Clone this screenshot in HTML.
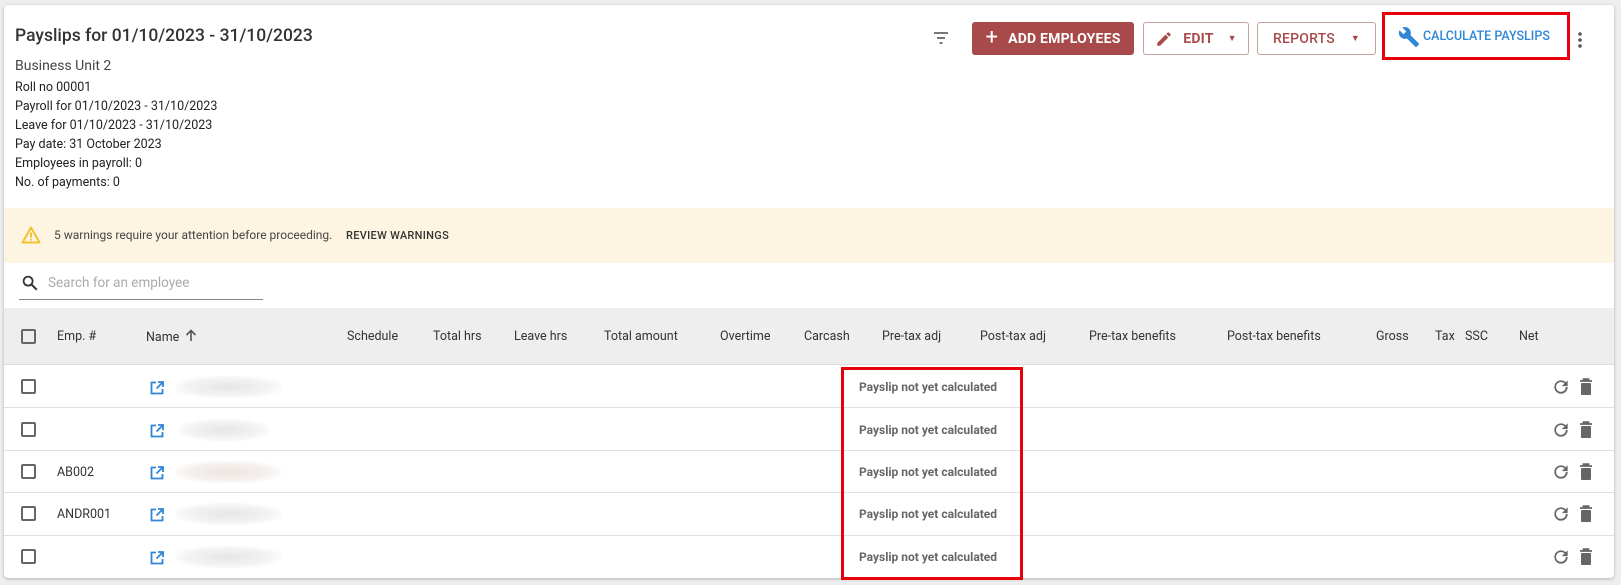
<!DOCTYPE html>
<html><head><style>
*{box-sizing:border-box;margin:0;padding:0}
body{width:1621px;height:585px;background:#eeeeee;font-family:"Roboto","Liberation Sans",sans-serif;color:#333;position:relative;overflow:hidden}
.card{position:absolute;left:4px;top:5px;width:1610px;height:573px;background:#fff;border-radius:4px;box-shadow:0 1px 3px rgba(0,0,0,.25)}
.a{position:absolute;white-space:nowrap}
.info{font-size:12.5px;color:#222}
.btn{position:absolute;top:17px;height:33px;border-radius:3px;font-size:14px;font-weight:bold;display:flex;align-items:center;justify-content:center;letter-spacing:.2px}
.th{position:absolute;top:324px;font-size:12.5px;color:#333}
.row{position:absolute;left:0;width:1610px;border-bottom:1px solid #e0e0e0}
.cb{position:absolute;left:18px;width:15px;height:15px;border:2px solid #666;border-radius:2px}
.pn{position:absolute;left:855px;font-size:12px;font-weight:bold;color:#666}
.blur{position:absolute;left:172px;width:105px;height:22px;background:radial-gradient(ellipse at center,#e6e6e6 0%,#f3f3f3 55%,#fff 80%)}
</style></head><body>
<div class="card">
<div class="a" style="left:11px;top:21px;font-size:17.5px;font-weight:500;color:#333">Payslips for 01/10/2023 - 31/10/2023</div>
<div class="a" style="left:11px;top:53px;font-size:14px;color:#444">Business Unit 2</div>
<div class="a info" style="left:11px;top:75px">Roll no 00001</div>
<div class="a info" style="left:11px;top:94px">Payroll for 01/10/2023 - 31/10/2023</div>
<div class="a info" style="left:11px;top:113px">Leave for 01/10/2023 - 31/10/2023</div>
<div class="a info" style="left:11px;top:132px">Pay date: 31 October 2023</div>
<div class="a info" style="left:11px;top:151px">Employees in payroll: 0</div>
<div class="a info" style="left:11px;top:170px">No. of payments: 0</div>

<svg class="a" style="left:929px;top:26px" width="16" height="14" viewBox="0 0 16 14"><path d="M1 2h14M4 7h8M6.5 12h3" stroke="#777" stroke-width="2"/></svg>
<div class="btn" style="left:968px;width:162px;background:#a84a4a;color:#fff"><span style="font-size:22px;font-weight:normal;margin-right:10px;margin-top:-3px">+</span>ADD EMPLOYEES</div>
<div class="btn" style="left:1139px;width:106px;border:1px solid #c9a0a0;color:#a84a4a;background:#fff">
<svg width="18" height="18" viewBox="0 0 24 24" style="margin-right:10px"><path d="M3 17.25V21h3.75L17.8 9.94l-3.75-3.75L3 17.25zM20.7 7.04a1 1 0 000-1.41l-2.34-2.34a1 1 0 00-1.41 0l-1.83 1.83 3.75 3.75 1.83-1.83z" fill="#a84a4a"/></svg>EDIT<span style="font-size:9px;margin-left:14px">&#9660;</span></div>
<div class="btn" style="left:1253px;width:119px;border:1px solid #c9a0a0;color:#a84a4a;background:#fff;font-weight:500">REPORTS<span style="font-size:9px;margin-left:16px">&#9660;</span></div>
<div class="a" style="left:1378px;top:7px;width:188px;height:48px;border:3px solid #e8000b"></div>
<svg class="a" style="left:1394px;top:21px" width="22" height="22" viewBox="0 0 24 24"><path d="M22.7 19l-9.1-9.1c.9-2.3.4-5-1.5-6.9-2-2-5-2.4-7.4-1.3L9 6 6 9 1.6 4.7C.4 7.1.9 10.1 2.9 12.1c1.9 1.9 4.6 2.4 6.9 1.5l9.1 9.1c.4.4 1 .4 1.4 0l2.3-2.3c.5-.4.5-1.1.1-1.4z" fill="#2f86d6"/></svg>
<div class="a" style="left:1419px;top:24px;font-size:12.5px;color:#2f86d6;font-weight:500">CALCULATE PAYSLIPS</div>
<svg class="a" style="left:1573px;top:26px" width="6" height="18"><circle cx="3" cy="3" r="1.8" fill="#555"/><circle cx="3" cy="9" r="1.8" fill="#555"/><circle cx="3" cy="15" r="1.8" fill="#555"/></svg>

<div class="a" style="left:0;top:203px;width:1610px;height:55px;background:#fdf5e1"></div>
<svg class="a" style="left:17px;top:221px" width="20" height="18" viewBox="0 0 20 18"><path d="M10 1.5L18.5 16.5H1.5Z" fill="none" stroke="#f2c12e" stroke-width="2" stroke-linejoin="round"/><path d="M10 6.5v5" stroke="#f2c12e" stroke-width="2"/><circle cx="10" cy="13.7" r="1" fill="#f2c12e"/></svg>
<div class="a" style="left:50px;top:223px;font-size:12px;color:#444">5 warnings require your attention before proceeding.</div>
<div class="a" style="left:342px;top:224px;font-size:11px;color:#333;font-weight:500;letter-spacing:.3px">REVIEW WARNINGS</div>

<svg class="a" style="left:17px;top:269px" width="18" height="18" viewBox="0 0 24 24"><circle cx="9.5" cy="9.5" r="6" fill="none" stroke="#333" stroke-width="2.4"/><path d="M14 14l7 7" stroke="#333" stroke-width="2.6"/></svg>
<div class="a" style="left:44px;top:270px;font-size:13.5px;color:#aaa">Search for an employee</div>
<div class="a" style="left:15px;top:294px;width:244px;height:1px;background:#888"></div>

<div class="a" style="left:0;top:303px;width:1610px;height:57px;background:#eeeeee;border-bottom:1px solid #ddd"></div>
<div class="cb" style="top:324px;left:17px"></div>
<div class="th" style="left:53px">Emp. #</div>
<div class="th" style="left:142px">Name <svg width="12" height="13" viewBox="0 0 12 13" style="vertical-align:-1px;margin-left:3px"><path d="M6 12V1.5M1.5 6L6 1.5 10.5 6" fill="none" stroke="#555" stroke-width="1.6"/></svg></div>
<div class="th" style="left:343px">Schedule</div>
<div class="th" style="left:429px">Total hrs</div>
<div class="th" style="left:510px">Leave hrs</div>
<div class="th" style="left:600px">Total amount</div>
<div class="th" style="left:716px">Overtime</div>
<div class="th" style="left:800px">Carcash</div>
<div class="th" style="left:878px">Pre-tax adj</div>
<div class="th" style="left:976px">Post-tax adj</div>
<div class="th" style="left:1085px">Pre-tax benefits</div>
<div class="th" style="left:1223px">Post-tax benefits</div>
<div class="th" style="left:1372px">Gross</div>
<div class="th" style="left:1431px">Tax</div>
<div class="th" style="left:1461px">SSC</div>
<div class="th" style="left:1515px">Net</div>

<div class="row" style="top:360px;height:43px"></div>
<div class="row" style="top:403px;height:43px"></div>
<div class="row" style="top:446px;height:42px"></div>
<div class="row" style="top:488px;height:43px"></div>

<div class="cb" style="top:374px;left:17px"></div>
<div class="cb" style="top:417px;left:17px"></div>
<div class="cb" style="top:459px;left:17px"></div>
<div class="cb" style="top:501px;left:17px"></div>
<div class="cb" style="top:544px;left:17px"></div>
<div class="a" style="left:53px;top:460px;font-size:12.5px">AB002</div>
<div class="a" style="left:53px;top:502px;font-size:12.5px">ANDR001</div>

<div class="blur" style="top:371px"></div>
<div class="blur" style="top:414px;left:175px;width:90px"></div>
<div class="blur" style="top:456px;background:radial-gradient(ellipse at center,#ece6e2 0%,#f6f1ee 55%,#fff 80%)"></div>
<div class="blur" style="top:498px"></div>
<div class="blur" style="top:541px"></div>

<svg class="a" style="left:146px;top:376px" width="14" height="14" viewBox="0 0 14 14"><path d="M6 1.5H1.5v11h11V8M8 1h5v5M13 1L6.5 7.5" fill="none" stroke="#2f86d6" stroke-width="1.8"/></svg>
<svg class="a" style="left:146px;top:419px" width="14" height="14" viewBox="0 0 14 14"><path d="M6 1.5H1.5v11h11V8M8 1h5v5M13 1L6.5 7.5" fill="none" stroke="#2f86d6" stroke-width="1.8"/></svg>
<svg class="a" style="left:146px;top:461px" width="14" height="14" viewBox="0 0 14 14"><path d="M6 1.5H1.5v11h11V8M8 1h5v5M13 1L6.5 7.5" fill="none" stroke="#2f86d6" stroke-width="1.8"/></svg>
<svg class="a" style="left:146px;top:503px" width="14" height="14" viewBox="0 0 14 14"><path d="M6 1.5H1.5v11h11V8M8 1h5v5M13 1L6.5 7.5" fill="none" stroke="#2f86d6" stroke-width="1.8"/></svg>
<svg class="a" style="left:146px;top:546px" width="14" height="14" viewBox="0 0 14 14"><path d="M6 1.5H1.5v11h11V8M8 1h5v5M13 1L6.5 7.5" fill="none" stroke="#2f86d6" stroke-width="1.8"/></svg>

<div class="a" style="left:837px;top:362px;width:182px;height:213px;border:3px solid #e8000b"></div>
<div class="pn" style="top:375px">Payslip not yet calculated</div>
<div class="pn" style="top:418px">Payslip not yet calculated</div>
<div class="pn" style="top:460px">Payslip not yet calculated</div>
<div class="pn" style="top:502px">Payslip not yet calculated</div>
<div class="pn" style="top:545px">Payslip not yet calculated</div>

<svg class="a" style="left:1547px;top:372px" width="20" height="20" viewBox="0 0 24 24"><path d="M17.65 6.35A7.96 7.96 0 0012 4a8 8 0 108 8h-2.2A5.9 5.9 0 1112 6c1.66 0 3.1.69 4.22 1.78L13 11h7V4l-2.35 2.35z" fill="#666"/></svg>
<svg class="a" style="left:1574px;top:373px" width="16" height="18" viewBox="0 0 14 18"><path d="M1 3h12M4.5 3V1.2h5V3" stroke="#666" stroke-width="1.8" fill="none"/><rect x="2" y="5" width="10" height="12" rx="1" fill="#666"/></svg>
<svg class="a" style="left:1547px;top:415px" width="20" height="20" viewBox="0 0 24 24"><path d="M17.65 6.35A7.96 7.96 0 0012 4a8 8 0 108 8h-2.2A5.9 5.9 0 1112 6c1.66 0 3.1.69 4.22 1.78L13 11h7V4l-2.35 2.35z" fill="#666"/></svg>
<svg class="a" style="left:1574px;top:416px" width="16" height="18" viewBox="0 0 14 18"><path d="M1 3h12M4.5 3V1.2h5V3" stroke="#666" stroke-width="1.8" fill="none"/><rect x="2" y="5" width="10" height="12" rx="1" fill="#666"/></svg>
<svg class="a" style="left:1547px;top:457px" width="20" height="20" viewBox="0 0 24 24"><path d="M17.65 6.35A7.96 7.96 0 0012 4a8 8 0 108 8h-2.2A5.9 5.9 0 1112 6c1.66 0 3.1.69 4.22 1.78L13 11h7V4l-2.35 2.35z" fill="#666"/></svg>
<svg class="a" style="left:1574px;top:458px" width="16" height="18" viewBox="0 0 14 18"><path d="M1 3h12M4.5 3V1.2h5V3" stroke="#666" stroke-width="1.8" fill="none"/><rect x="2" y="5" width="10" height="12" rx="1" fill="#666"/></svg>
<svg class="a" style="left:1547px;top:499px" width="20" height="20" viewBox="0 0 24 24"><path d="M17.65 6.35A7.96 7.96 0 0012 4a8 8 0 108 8h-2.2A5.9 5.9 0 1112 6c1.66 0 3.1.69 4.22 1.78L13 11h7V4l-2.35 2.35z" fill="#666"/></svg>
<svg class="a" style="left:1574px;top:500px" width="16" height="18" viewBox="0 0 14 18"><path d="M1 3h12M4.5 3V1.2h5V3" stroke="#666" stroke-width="1.8" fill="none"/><rect x="2" y="5" width="10" height="12" rx="1" fill="#666"/></svg>
<svg class="a" style="left:1547px;top:542px" width="20" height="20" viewBox="0 0 24 24"><path d="M17.65 6.35A7.96 7.96 0 0012 4a8 8 0 108 8h-2.2A5.9 5.9 0 1112 6c1.66 0 3.1.69 4.22 1.78L13 11h7V4l-2.35 2.35z" fill="#666"/></svg>
<svg class="a" style="left:1574px;top:543px" width="16" height="18" viewBox="0 0 14 18"><path d="M1 3h12M4.5 3V1.2h5V3" stroke="#666" stroke-width="1.8" fill="none"/><rect x="2" y="5" width="10" height="12" rx="1" fill="#666"/></svg>
</div>
</body></html>
